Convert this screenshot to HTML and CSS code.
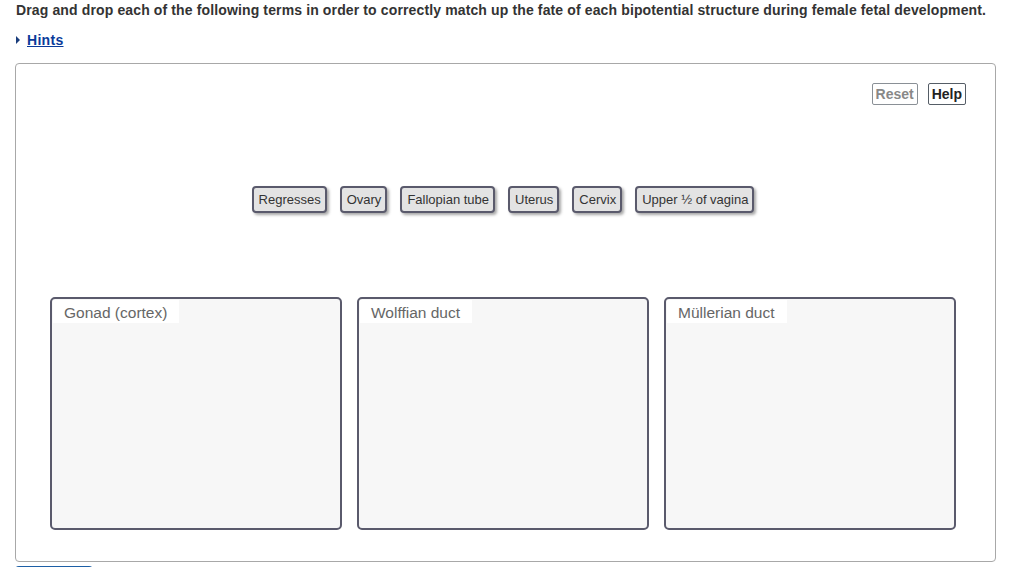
FILE: index.html
```html
<!DOCTYPE html>
<html>
<head>
<meta charset="utf-8">
<title>Drag and drop</title>
<link rel="stylesheet" href="styles.css">
</head>
<body>
  <p class="prompt">Drag and drop each of the following terms in order to correctly match up the fate of each bipotential structure during female fetal development.</p>
  <div class="hints"><span class="caret"></span><a href="#">Hints</a></div>

  <section class="dnd">
    <div class="tools">
      <button class="tool disabled">Reset</button>
      <button class="tool">Help</button>
    </div>

    <div class="bank">
      <span class="term">Regresses</span>
      <span class="term">Ovary</span>
      <span class="term">Fallopian tube</span>
      <span class="term">Uterus</span>
      <span class="term">Cervix</span>
      <span class="term">Upper ½ of vagina</span>
    </div>

    <div class="zones">
      <div class="zone"><span class="zone-label">Gonad (cortex)</span></div>
      <div class="zone"><span class="zone-label">Wolffian duct</span></div>
      <div class="zone"><span class="zone-label">Müllerian duct</span></div>
    </div>
  </section>

  <div class="submit" aria-label="Submit"></div>
</body>
</html>
```

FILE: styles.css
```css
body {
  margin: 0;
  padding: 0 13px 0 15px;
  font-family: "Liberation Sans", Arial, sans-serif;
  color: #333;
  background: #fff;
  overflow: hidden;
}

.prompt {
  margin: 2px 0 0 1px;
  font-size: 14px;
  line-height: 16px;
  letter-spacing: 0.13px;
  font-weight: bold;
  color: #333;
  white-space: nowrap;
}

.hints {
  display: flex;
  align-items: center;
  height: 18px;
  margin: 13px 0 0 1px;
  font-size: 14px;
  font-weight: bold;
}
.hints .caret {
  width: 0;
  height: 0;
  border-left: 4px solid #1a3d7c;
  border-top: 4px solid transparent;
  border-bottom: 4px solid transparent;
  margin-right: 7px;
}
.hints a {
  color: #0a3a9a;
  text-decoration: underline;
  letter-spacing: 0.3px;
}

.dnd {
  box-sizing: border-box;
  width: 981px;
  height: 499px;
  margin-top: 14px;
  border: 1px solid #a8a8a8;
  border-radius: 4px;
  padding: 19px 29px 0 34px;
}

.tools {
  display: flex;
  justify-content: flex-end;
  gap: 10px;
}
.tool {
  font-family: "Liberation Sans", Arial, sans-serif;
  font-size: 14px;
  font-weight: bold;
  color: #222;
  background: #fff;
  border: 1px solid #555d66;
  border-radius: 2px;
  height: 22px;
  padding: 0 3px;
  line-height: 20px;
}
.tool.disabled {
  color: #888;
  border-color: #8a9096;
}

.bank {
  display: flex;
  justify-content: center;
  gap: 13px;
  margin: 81px 0 0 -10px;
}
.term {
  box-sizing: border-box;
  height: 27px;
  padding: 0 4px 0 5px;
  line-height: 23px;
  font-size: 13px;
  color: #333;
  background: #e3e3e3;
  border: 2px solid #5a5a6c;
  border-radius: 4px;
  box-shadow: 2px 2px 3px rgba(0, 0, 0, 0.35);
}

.zones {
  display: flex;
  gap: 15px;
  margin-top: 84px;
}
.zone {
  box-sizing: border-box;
  width: 292px;
  height: 233px;
  background: #f7f7f7;
  border: 2px solid #5a5a6c;
  border-radius: 5px;
}
.zone-label {
  display: inline-block;
  margin: 1px 0 0 1px;
  padding: 2px 12px 0 11px;
  height: 21px;
  line-height: 21px;
  background: #fff;
  font-size: 15.5px;
  color: #666;
}

.submit {
  margin-top: 4px;
  width: 78px;
  height: 30px;
  border-radius: 4px;
  background: #1d5fa6;
}
```
